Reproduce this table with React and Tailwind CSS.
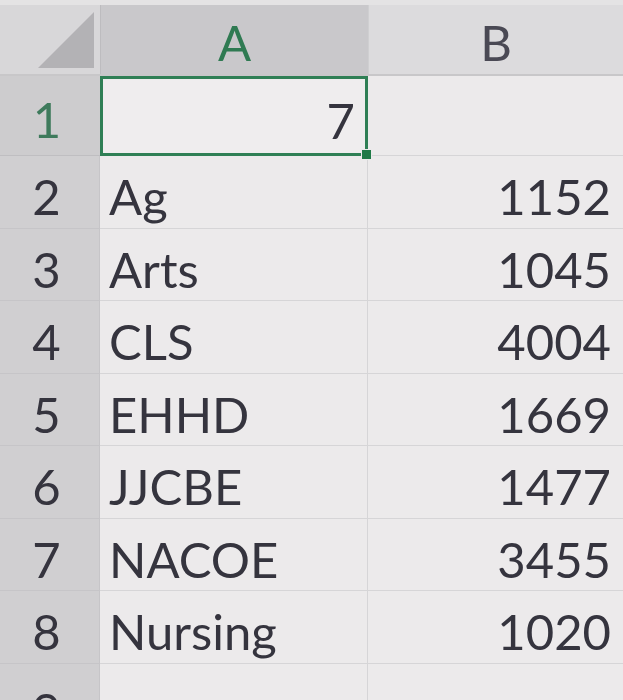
import React from 'react';

const rows = [
  { n: 2, name: 'Ag', val: 1152 },
  { n: 3, name: 'Arts', val: 1045 },
  { n: 4, name: 'CLS', val: 4004 },
  { n: 5, name: 'EHHD', val: 1669 },
  { n: 6, name: 'JJCBE', val: 1477 },
  { n: 7, name: 'NACOE', val: 3455 },
  { n: 8, name: 'Nursing', val: 1020 },
];

const App = () => {
  return (
    <div
      className="w-[623px] h-[700px] overflow-hidden bg-[#eceaeb] text-[#35343e] text-[49px] leading-none"
      style={{ fontFamily: 'Lato, "Open Sans", sans-serif' }}
    >
      <div className="h-[5px] bg-[#e4e3e4]" />

      {/* column headers */}
      <div className="grid grid-cols-[100px_268px_1fr] h-[71px] border-b-2 border-[#c8c7c9]">
        <div className="bg-[#d8d7d9] flex items-end justify-end pr-[6px] pb-[6px]">
          <div className="w-[56px] h-[56px] bg-[#b3b2b5] [clip-path:polygon(100%_0,100%_100%,0_100%)]" />
        </div>
        <div className="bg-[#c9c8cb] border-l border-[#bdbcbf] flex items-center justify-center pt-[6px] text-[#2f7a52]">
          A
        </div>
        <div className="bg-[#dcdbdd] border-l border-[#cfcfd1] flex items-center justify-center pt-[6px] text-[#4a4954]">
          B
        </div>
      </div>

      {/* row 1 */}
      <div className="grid grid-cols-[100px_268px_1fr] h-[80px]">
        <div className="bg-[#cdccce] border-b border-[#bfbec1] flex items-center justify-center pr-[6px] pt-[8px] text-[#3e7a5c]">
          1
        </div>
        <div className="relative border-[3px] border-[#2f7f55] bg-[#efedee] flex items-center justify-end pr-[10px] pt-[8px]">
          7
          <div className="absolute -right-[7px] -bottom-[7px] w-[11px] h-[11px] bg-[#1f7a47] border border-[#eceaeb]" />
        </div>
        <div className="border-b border-[#d6d5d7]" />
      </div>

      {rows.map((r) => (
        <div key={r.n} className="grid grid-cols-[100px_268px_1fr] h-[72.5px]">
          <div className="bg-[#d0cfd1] border-b border-[#c2c1c4] border-r border-[#c6c5c8] flex items-center justify-center pr-[6px] pt-[10px]">
            {r.n}
          </div>
          <div className="border-b border-r border-[#d6d5d7] flex items-center pl-[9px] pt-[10px]">
            {r.name}
          </div>
          <div className="border-b border-[#d6d5d7] flex items-center justify-end pr-[12px] pt-[10px]">
            {r.val}
          </div>
        </div>
      ))}

      <div className="grid grid-cols-[100px_268px_1fr] h-[72px]">
        <div className="bg-[#d0cfd1] border-r border-[#c6c5c8] flex items-start justify-center pr-[6px] pt-[22px]">
          9
        </div>
        <div className="border-r border-[#d6d5d7]" />
        <div />
      </div>
    </div>
  );
};

export default App;
